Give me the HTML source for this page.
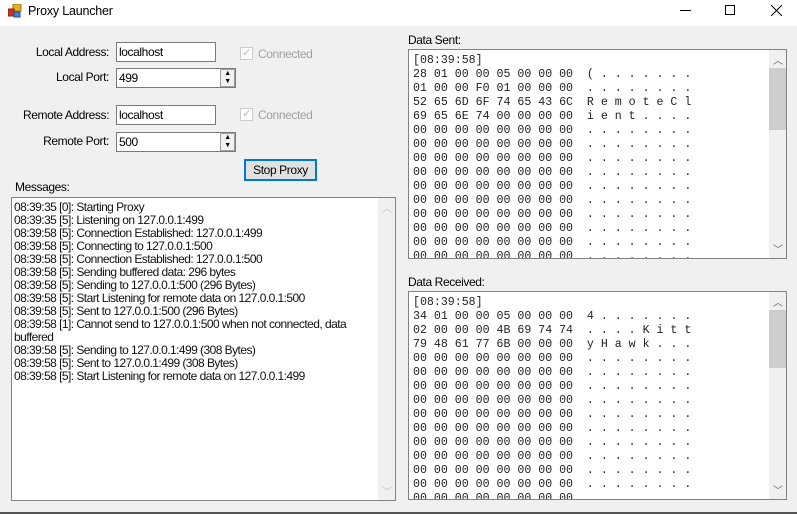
<!DOCTYPE html>
<html><head><meta charset="utf-8"><style>
*{margin:0;padding:0;box-sizing:border-box}
body{width:797px;height:514px;background:#f0f0f0;font-family:"Liberation Sans",sans-serif;font-size:12px;color:#000;position:relative;overflow:hidden;letter-spacing:-0.4px}
.a{position:absolute}
.title{left:0;top:0;width:797px;height:26px;background:#fff}
.lbl{position:absolute;text-align:right;width:100px;white-space:nowrap}
.tb{position:absolute;background:#fff;border:1px solid #7a7a7a;height:20px;padding:2px 0 0 2px}
.chk{position:absolute;color:#a0a0a0}
.chk i{position:absolute;left:0;top:0;width:13px;height:13px;border:1px solid #cccccc;background:#fff;font-style:normal;font-size:11px;line-height:11px;text-align:center;color:#b8b8b8}
.box{position:absolute;background:#fff;border:1px solid #828282;overflow:hidden}
.sb{position:absolute;right:0;top:0;bottom:0;width:17px;background:#f0f0f0}
.thumb{position:absolute;left:0;width:17px;background:#cdcdcd}
pre{font-family:"Liberation Mono",monospace;font-size:11.6px;line-height:14px;color:#222;position:absolute;left:4px;top:4px;letter-spacing:0}
.msg{position:absolute;left:2px;top:3px;line-height:13px;font-size:12px;white-space:nowrap;color:#111;letter-spacing:-0.55px}
</style></head><body>
<div class="a title"></div>
<svg class="a" style="left:8px;top:4px" width="14" height="14"><rect x="5" y="0" width="8" height="7" fill="#e8b020" stroke="#a07010"/><rect x="0" y="5" width="6" height="7" fill="#d03020" stroke="#802010"/><rect x="6" y="8" width="6" height="5" fill="#4080d0" stroke="#205090"/></svg>
<div class="a" style="left:28px;top:4px;font-size:12.5px;letter-spacing:-0.2px">Proxy Launcher</div>
<div class="a" style="left:680px;top:10px;width:11px;height:1px;background:#000"></div>
<div class="a" style="left:725px;top:5px;width:10px;height:10px;border:1px solid #000"></div>
<svg class="a" style="left:771px;top:5px" width="11" height="11"><path d="M0 0L11 11M11 0L0 11" stroke="#000" stroke-width="1"/></svg>

<div class="lbl" style="left:9px;top:45px">Local Address:</div>
<div class="tb" style="left:116px;top:42px;width:100px">localhost</div>
<div class="chk" style="left:240px;top:47px"><i>✓</i><span style="margin-left:18px">Connected</span></div>
<div class="lbl" style="left:9px;top:70px">Local Port:</div>
<div class="tb" style="left:116px;top:68px;width:120px">499</div>
<div class="a" style="left:220px;top:69px;width:15px;height:18px;background:#f0f0f0;border:1px solid #a0a0a0;font-size:7px;line-height:8px;text-align:center">▲<br>▼</div>

<div class="lbl" style="left:9px;top:108px">Remote Address:</div>
<div class="tb" style="left:116px;top:105px;width:100px">localhost</div>
<div class="chk" style="left:240px;top:108px"><i>✓</i><span style="margin-left:18px">Connected</span></div>
<div class="lbl" style="left:9px;top:134px">Remote Port:</div>
<div class="tb" style="left:116px;top:132px;width:120px">500</div>
<div class="a" style="left:220px;top:133px;width:15px;height:18px;background:#f0f0f0;border:1px solid #a0a0a0;font-size:7px;line-height:8px;text-align:center">▲<br>▼</div>

<div class="a" style="left:244px;top:159px;width:73px;height:22px;border:2px solid #0078d7;background:#e1e1e1;text-align:center;line-height:18px">Stop Proxy</div>
<div class="a" style="left:15px;top:180px">Messages:</div>

<div class="box" style="left:11px;top:197px;width:385px;height:304px">
<div class="msg">08:39:35 [0]: Starting Proxy<br>08:39:35 [5]: Listening on 127.0.0.1:499<br>08:39:58 [5]: Connection Established: 127.0.0.1:499<br>08:39:58 [5]: Connecting to 127.0.0.1:500<br>08:39:58 [5]: Connection Established: 127.0.0.1:500<br>08:39:58 [5]: Sending buffered data: 296 bytes<br>08:39:58 [5]: Sending to 127.0.0.1:500 (296 Bytes)<br>08:39:58 [5]: Start Listening for remote data on 127.0.0.1:500<br>08:39:58 [5]: Sent to 127.0.0.1:500 (296 Bytes)<br>08:39:58 [1]: Cannot send to 127.0.0.1:500 when not connected, data<br>buffered<br>08:39:58 [5]: Sending to 127.0.0.1:499 (308 Bytes)<br>08:39:58 [5]: Sent to 127.0.0.1:499 (308 Bytes)<br>08:39:58 [5]: Start Listening for remote data on 127.0.0.1:499</div>
<div class="sb"><div class="a" style="left:4px;top:2px;color:#c0c0c0;font-size:10px">︿</div><div class="a" style="left:4px;bottom:2px;color:#c0c0c0;font-size:10px">﹀</div></div>
</div>

<div class="a" style="left:408px;top:33px">Data Sent:</div>
<div class="box" style="left:408px;top:49px;width:379px;height:210px">
<pre>[08:39:58]
28 01 00 00 05 00 00 00  ( . . . . . . .
01 00 00 F0 01 00 00 00  . . . . . . . .
52 65 6D 6F 74 65 43 6C  R e m o t e C l
69 65 6E 74 00 00 00 00  i e n t . . . .
00 00 00 00 00 00 00 00  . . . . . . . .
00 00 00 00 00 00 00 00  . . . . . . . .
00 00 00 00 00 00 00 00  . . . . . . . .
00 00 00 00 00 00 00 00  . . . . . . . .
00 00 00 00 00 00 00 00  . . . . . . . .
00 00 00 00 00 00 00 00  . . . . . . . .
00 00 00 00 00 00 00 00  . . . . . . . .
00 00 00 00 00 00 00 00  . . . . . . . .
00 00 00 00 00 00 00 00  . . . . . . . .
00 00 00 00 00 00 00 00  . . . . . . . .</pre>
<div class="sb"><div class="a" style="left:4px;top:2px;color:#606060;font-size:10px">︿</div><div class="thumb" style="top:18px;height:62px"></div><div class="a" style="left:4px;bottom:2px;color:#606060;font-size:10px">﹀</div></div>
</div>

<div class="a" style="left:408px;top:275px">Data Received:</div>
<div class="box" style="left:408px;top:291px;width:379px;height:209px">
<pre>[08:39:58]
34 01 00 00 05 00 00 00  4 . . . . . . .
02 00 00 00 4B 69 74 74  . . . . K i t t
79 48 61 77 6B 00 00 00  y H a w k . . .
00 00 00 00 00 00 00 00  . . . . . . . .
00 00 00 00 00 00 00 00  . . . . . . . .
00 00 00 00 00 00 00 00  . . . . . . . .
00 00 00 00 00 00 00 00  . . . . . . . .
00 00 00 00 00 00 00 00  . . . . . . . .
00 00 00 00 00 00 00 00  . . . . . . . .
00 00 00 00 00 00 00 00  . . . . . . . .
00 00 00 00 00 00 00 00  . . . . . . . .
00 00 00 00 00 00 00 00  . . . . . . . .
00 00 00 00 00 00 00 00  . . . . . . . .
00 00 00 00 00 00 00 00  . . . . . . . .</pre>
<div class="sb"><div class="a" style="left:4px;top:2px;color:#606060;font-size:10px">︿</div><div class="thumb" style="top:18px;height:58px"></div><div class="a" style="left:4px;bottom:2px;color:#606060;font-size:10px">﹀</div></div>
</div>
<div class="a" style="left:0;top:512px;width:797px;height:2px;background:#555"></div>
</body></html>
